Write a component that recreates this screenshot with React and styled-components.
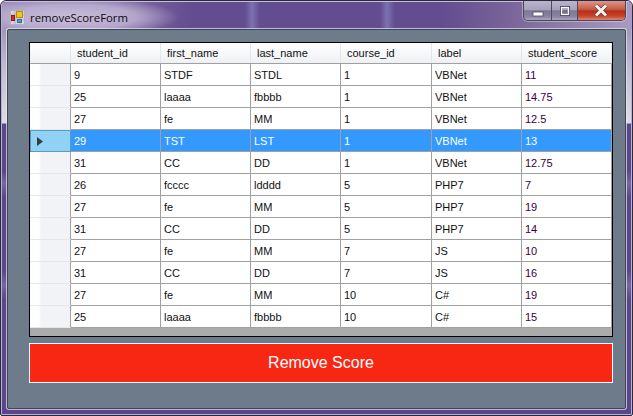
import React from 'react'
import styled, { createGlobalStyle } from 'styled-components'

const GlobalStyle = createGlobalStyle`
  html, body {
    margin: 0;
    padding: 0;
    background: #ffffff;
  }
  * {
    box-sizing: border-box;
  }
`

const COLUMNS = '41px 90px 90px 90px 91px 90px 90px'

const Window = styled.div`
  width: 633px;
  height: 416px;
  display: flex;
  flex-direction: column;
  border: 1px solid #2c2844;
  border-radius: 6px 6px 2px 2px;
  overflow: hidden;
  box-shadow: inset 0 0 0 1px #b9b2cf;
  background: linear-gradient(180deg, #8d7cab 0, #c4bed2 70px, #dedde3 122px, #5c468a 123px, #5c468a 170px, #75689f 182px, #5c468a 196px, #5c468a 270px, #75689f 284px, #5c468a 298px, #5c468a 100%);
`

const TitleBar = styled.div`
  height: 28px;
  flex-shrink: 0;
  display: flex;
  justify-content: space-between;
  align-items: flex-start;
  padding: 0 6px 0 8px;
  background:
    radial-gradient(ellipse 105px 20px at 72px 15px, rgba(206, 197, 222, 0.9) 0, rgba(196, 186, 216, 0.75) 60%, rgba(196, 186, 216, 0) 100%),
    linear-gradient(90deg, transparent 243px, rgba(150, 150, 205, 0.5) 250px, transparent 258px, transparent 378px, rgba(150, 150, 205, 0.5) 385px, transparent 393px),
    linear-gradient(90deg, #9c8db8 0, #7f6ca3 120px, #624d8f 190px, #624d8f 440px, #7a6699 510px, #a99cc0 100%);
  border-top: 1px solid #c6bfd6;
  border-left: 1px solid #b9b2cf;
`

const TitleGroup = styled.div`
  display: flex;
  align-items: center;
  gap: 5px;
  height: 27px;
  padding-top: 3px;
`

const TitleText = styled.span`
  font-family: "Open Sans", "Liberation Sans", sans-serif;
  font-size: 11.4px;
  color: #15070f;
  white-space: nowrap;
`

const WindowButtons = styled.div`
  display: flex;
  width: 103px;
  height: 20px;
  margin-top: -1px;
  border: 1px solid #4a4658;
  border-top: 0;
  border-radius: 0 0 5px 5px;
  overflow: hidden;
  box-shadow: 0 0 0 1px rgba(255, 255, 255, 0.35);
`

const WindowButton = styled.div`
  display: flex;
  align-items: center;
  justify-content: center;
  width: ${props => props.$width}px;
  border-right: ${props => (props.$close ? '0' : '1px solid #4e4a60')};
  background: ${props =>
    props.$close
      ? 'linear-gradient(180deg, #d9988c 0, #c9604c 40%, #b8301a 55%, #c8442c 80%, #dc8a70 100%)'
      : 'linear-gradient(180deg, #b9b3cb 0, #a7a1bc 45%, #7d7896 52%, #87839f 80%, #aaa6bf 100%)'};
`

const Client = styled.div`
  flex: 1;
  margin: 0 6px 7px 6px;
  padding: 12px 12px 25px 21px;
  display: flex;
  flex-direction: column;
  gap: 6px;
  background: #6d7b8b;
  border: 1px solid #3b4652;
  border-radius: 2px;
  box-shadow: 0 0 0 1px rgba(235, 232, 245, 0.7);
`

const Grid = styled.div`
  width: 584px;
  height: 295px;
  display: flex;
  flex-direction: column;
  border: 1px solid #000000;
  background: #ababab;
`

const HeaderRow = styled.div`
  display: grid;
  grid-template-columns: ${COLUMNS};
  height: 21px;
  background: linear-gradient(180deg, #ffffff 0, #f7f8fa 50%, #eff0f3 100%);
  border-bottom: 1px solid #a0a0a0;
`

const HeaderCell = styled.div`
  display: flex;
  align-items: center;
  padding-left: 6px;
  font-family: "Liberation Sans", Arial, sans-serif;
  font-size: 11px;
  color: #111111;
  border-right: 1px solid #e4e5e8;
`

const Row = styled.div`
  display: grid;
  grid-template-columns: ${COLUMNS};
  height: 22px;
  background: ${props => (props.$selected ? '#3399ff' : '#ffffff')};
  border-bottom: 1px solid #a0a0a0;
`

const RowHeader = styled.div`
  display: flex;
  align-items: center;
  padding-left: 6px;
  margin-bottom: -1px;
  background: ${props =>
    props.$selected
      ? '#8fd2f6'
      : 'linear-gradient(90deg, #ffffff 0, #ffffff 9px, #f2f3f6 11px, #f2f3f6 100%)'};
  border: ${props => (props.$selected ? '1px solid #5c9ab6' : '0')};
  border-bottom: 1px solid ${props => (props.$selected ? '#5c9ab6' : '#e6e7ea')};
  border-right: 1px solid ${props => (props.$selected ? '#5c9ab6' : '#a0a0a0')};
`

const Cell = styled.div`
  display: flex;
  align-items: center;
  padding-left: 3px;
  font-family: "Liberation Sans", Arial, sans-serif;
  font-size: 11px;
  white-space: nowrap;
  color: ${props => (props.$selected ? '#ffffff' : props.$score ? '#3a003a' : '#111111')};
  border-right: 1px solid #a0a0a0;
`

const RemoveButton = styled.button`
  width: 584px;
  height: 40px;
  padding: 0;
  border: 1px solid #ffffff;
  background: #f72714;
  color: #ffffff;
  font-family: "Liberation Sans", Arial, sans-serif;
  font-size: 16px;
`

const headers = ['student_id', 'first_name', 'last_name', 'course_id', 'label', 'student_score']

const scores = [
  ['9', 'STDF', 'STDL', '1', 'VBNet', '11'],
  ['25', 'laaaa', 'fbbbb', '1', 'VBNet', '14.75'],
  ['27', 'fe', 'MM', '1', 'VBNet', '12.5'],
  ['29', 'TST', 'LST', '1', 'VBNet', '13'],
  ['31', 'CC', 'DD', '1', 'VBNet', '12.75'],
  ['26', 'fcccc', 'ldddd', '5', 'PHP7', '7'],
  ['27', 'fe', 'MM', '5', 'PHP7', '19'],
  ['31', 'CC', 'DD', '5', 'PHP7', '14'],
  ['27', 'fe', 'MM', '7', 'JS', '10'],
  ['31', 'CC', 'DD', '7', 'JS', '16'],
  ['27', 'fe', 'MM', '10', 'C#', '19'],
  ['25', 'laaaa', 'fbbbb', '10', 'C#', '15'],
]

const SELECTED_ROW = 3

function FormIcon() {
  return (
    <svg width="15" height="15" viewBox="0 0 15 15">
      <rect x="0.5" y="0.5" width="14" height="14" fill="#d6d3de" stroke="#b4b0bf" />
      <path d="M5 1v13M10 1v13M1 5h13M1 10h13" stroke="#b5b1bf" />
      <rect x="6.5" y="1.5" width="6" height="6" fill="#f3c21f" stroke="#b98a10" />
      <rect x="1.5" y="5.5" width="3" height="5" fill="#d92c20" stroke="#8f1d18" />
      <rect x="7.5" y="9.5" width="4" height="3" fill="#4f95e0" stroke="#3a70b0" />
    </svg>
  )
}

function MinimizeGlyph() {
  return (
    <svg width="12" height="12" viewBox="0 0 12 12">
      <rect x="1" y="7" width="10" height="4" fill="#ffffff" stroke="#4c4a5c" strokeWidth="0.8" />
    </svg>
  )
}

function MaximizeGlyph() {
  return (
    <svg width="12" height="12" viewBox="0 0 12 12">
      <rect x="1.5" y="1.5" width="9" height="9" fill="none" stroke="#4c4a5c" strokeWidth="1" />
      <rect x="2.5" y="2.5" width="7" height="7" fill="none" stroke="#ffffff" strokeWidth="1.2" />
      <rect x="4" y="5" width="4" height="3" fill="#77728e" />
    </svg>
  )
}

function CloseGlyph() {
  return (
    <svg width="16" height="13" viewBox="0 0 16 13">
      <path d="M3 1.5 13 11.5M13 1.5 3 11.5" stroke="#5a3a36" strokeWidth="4.2" />
      <path d="M3 1.5 13 11.5M13 1.5 3 11.5" stroke="#f4f1f1" strokeWidth="3" />
    </svg>
  )
}

function RowArrow() {
  return (
    <svg width="6" height="9" viewBox="0 0 6 9">
      <path d="M0 0 6 4.5 0 9Z" fill="#3a3a3a" />
    </svg>
  )
}

function App() {
  return (
    <>
      <GlobalStyle />
      <Window>
        <TitleBar>
          <TitleGroup>
            <FormIcon />
            <TitleText>removeScoreForm</TitleText>
          </TitleGroup>
          <WindowButtons>
            <WindowButton $width={29}><MinimizeGlyph /></WindowButton>
            <WindowButton $width={26}><MaximizeGlyph /></WindowButton>
            <WindowButton $width={48} $close><CloseGlyph /></WindowButton>
          </WindowButtons>
        </TitleBar>
        <Client>
          <Grid>
            <HeaderRow>
              <HeaderCell />
              {headers.map(name => (
                <HeaderCell key={name}>{name}</HeaderCell>
              ))}
            </HeaderRow>
            {scores.map((row, i) => (
              <Row key={i} $selected={i === SELECTED_ROW}>
                <RowHeader $selected={i === SELECTED_ROW}>
                  {i === SELECTED_ROW && <RowArrow />}
                </RowHeader>
                {row.map((value, j) => (
                  <Cell key={j} $selected={i === SELECTED_ROW} $score={j === 5}>
                    {value}
                  </Cell>
                ))}
              </Row>
            ))}
          </Grid>
          <RemoveButton>Remove Score</RemoveButton>
        </Client>
      </Window>
    </>
  )
}

export default App
